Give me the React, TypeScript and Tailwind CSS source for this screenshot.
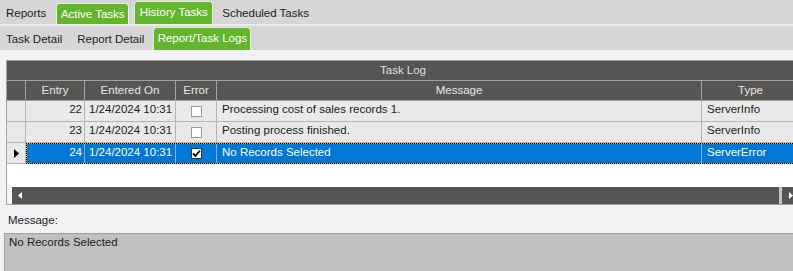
import React from "react";

type Row = {
  entry: number;
  on: string;
  error: boolean;
  message: string;
  type: string;
  selected?: boolean;
};

const rows: Row[] = [
  { entry: 22, on: "1/24/2024 10:31", error: false, message: "Processing cost of sales records 1.", type: "ServerInfo" },
  { entry: 23, on: "1/24/2024 10:31", error: false, message: "Posting process finished.", type: "ServerInfo" },
  { entry: 24, on: "1/24/2024 10:31", error: true, message: "No Records Selected", type: "ServerError", selected: true },
];

const Tab = ({ children, className }: { children: React.ReactNode; className: string }) => (
  <div
    className={
      "flex items-center justify-center shrink-0 bg-[#63b52c] text-white border border-b-0 border-[#e4efdc] rounded-t-[4px] " +
      className
    }
  >
    {children}
  </div>
);

const Checkbox = ({ checked, dark }: { checked: boolean; dark?: boolean }) => (
  <div
    className={
      "w-[11px] h-[11px] bg-white border flex items-center justify-center " +
      (dark ? "border-[#333333]" : "border-[#9a9a9a]")
    }
  >
    {checked && (
      <svg width="9" height="9" viewBox="0 0 9 9">
        <path d="M1 4.5 L3.5 7 L8 1.5" fill="none" stroke="#000" strokeWidth="1.8" />
      </svg>
    )}
  </div>
);

const App = () => {
  return (
    <div className="w-[793px] h-[271px] overflow-hidden bg-[#f2f2f4] flex flex-col font-['Liberation_Sans',Arial,sans-serif] text-[11.5px] text-[#1b1b1b]">
      {/* top tabs */}
      <div className="h-[24px] shrink-0 bg-[#d6d6d6] flex items-end pl-[6px]">
        <span className="self-center mt-[3px] mr-[10px]">Reports</span>
        <Tab className="h-[21px] w-[73px] pt-[1px]">Active Tasks</Tab>
        <Tab className="h-[23px] w-[79px] ml-[5px]">History Tasks</Tab>
        <span className="self-center mt-[3px] ml-[9px]">Scheduled Tasks</span>
      </div>
      <div className="h-[2px] shrink-0 bg-[#ececec]" />
      <div className="h-[24px] shrink-0 bg-[#d6d6d6] flex items-end pl-[6px]">
        <span className="self-center mt-[4px] mr-[15px]">Task Detail</span>
        <span className="self-center mt-[4px] mr-[9px]">Report Detail</span>
        <Tab className="h-[23px] w-[98px]">Report/Task Logs</Tab>
      </div>

      {/* grid */}
      <div className="mt-[10px] ml-[6px] w-[794px] shrink-0 border border-[#a0a0a0] flex flex-col">
        <div className="h-[20px] bg-[#575553] border-b border-[#a0a0a0] flex items-center justify-center text-[#dedede]">
          Task Log
        </div>
        <div className="h-[20px] bg-[#575553] border-b border-[#a0a0a0] flex text-[#e6e6e6]">
          <div className="w-[19px] border-r border-[#a0a0a0]" />
          <div className="w-[59px] border-r border-[#a0a0a0] flex items-center justify-center">Entry</div>
          <div className="w-[91px] border-r border-[#a0a0a0] flex items-center justify-center">Entered On</div>
          <div className="w-[41px] border-r border-[#a0a0a0] flex items-center justify-center">Error</div>
          <div className="w-[485px] border-r border-[#a0a0a0] flex items-center justify-center">Message</div>
          <div className="flex-1 flex items-center justify-center">Type</div>
        </div>

        {rows.map((r) =>
          r.selected ? (
            <div key={r.entry} className="h-[21px] flex">
              <div className="w-[19px] bg-[#e9e9e9] border-r border-b border-[#b4b4b4] flex items-center justify-center">
                <svg width="5" height="9" viewBox="0 0 5 9">
                  <path d="M0 0 L5 4.5 L0 9 Z" fill="#000" />
                </svg>
              </div>
              <div className="flex-1 flex border border-dotted border-black bg-[#f3a23a] text-white">
                <div className="w-[58px] bg-[#0078d7] border-r border-[#8fb0cf] text-right pr-[2px] leading-[14px] pt-[1px]">
                  {r.entry}
                </div>
                <div className="w-[91px] bg-[#0078d7] border-r border-[#8fb0cf] pl-[4px] leading-[14px] pt-[1px]">{r.on}</div>
                <div className="w-[41px] bg-[#0078d7] border-r border-[#8fb0cf] flex items-center justify-center">
                  <Checkbox checked={r.error} dark />
                </div>
                <div className="w-[485px] bg-[#0078d7] border-r border-[#8fb0cf] pl-[5px] leading-[14px] pt-[1px]">
                  {r.message}
                </div>
                <div className="flex-1 bg-[#0078d7] pl-[5px] leading-[14px] pt-[1px] whitespace-nowrap">{r.type}</div>
              </div>
            </div>
          ) : (
            <div key={r.entry} className="h-[21px] flex bg-[#e9e9e9] border-b border-[#b4b4b4]">
              <div className="w-[19px] border-r border-[#b4b4b4]" />
              <div className="w-[59px] border-r border-[#b4b4b4] text-right pr-[2px] leading-[14px] pt-[1px]">{r.entry}</div>
              <div className="w-[91px] border-r border-[#b4b4b4] pl-[4px] leading-[14px] pt-[1px]">{r.on}</div>
              <div className="w-[41px] border-r border-[#b4b4b4] flex items-center justify-center">
                <Checkbox checked={r.error} />
              </div>
              <div className="w-[485px] border-r border-[#b4b4b4] pl-[5px] leading-[14px] pt-[1px]">{r.message}</div>
              <div className="flex-1 pl-[5px] leading-[14px] pt-[1px] whitespace-nowrap">{r.type}</div>
            </div>
          )
        )}

        <div className="h-[23px] bg-white" />

        {/* horizontal scrollbar */}
        <div className="h-[17px] flex">
          <div className="w-[5px] bg-[#f4f4f4]" />
          <div className="flex-1 bg-[#575553] flex items-center pl-[6px]">
            <svg width="4" height="7" viewBox="0 0 4 7">
              <path d="M4 0 L0 3.5 L4 7 Z" fill="#fff" />
            </svg>
          </div>
          <div className="w-[3px] bg-[#c4c4c4]" />
          <div className="w-[17px] bg-[#575553] flex items-center pl-[7px]">
            <svg width="4" height="7" viewBox="0 0 4 7">
              <path d="M0 0 L4 3.5 L0 7 Z" fill="#fff" />
            </svg>
          </div>
        </div>
      </div>

      {/* message area */}
      <div className="h-[28px] shrink-0 flex items-center pl-[8px] pt-[4px]">Message:</div>
      <div className="flex-1 ml-[4px] bg-[#c0c0c0] border-t border-l border-[#a0a0a0] pl-[4px] pt-[1px] leading-[14px]">
        No Records Selected
      </div>
    </div>
  );
};

export default App;
